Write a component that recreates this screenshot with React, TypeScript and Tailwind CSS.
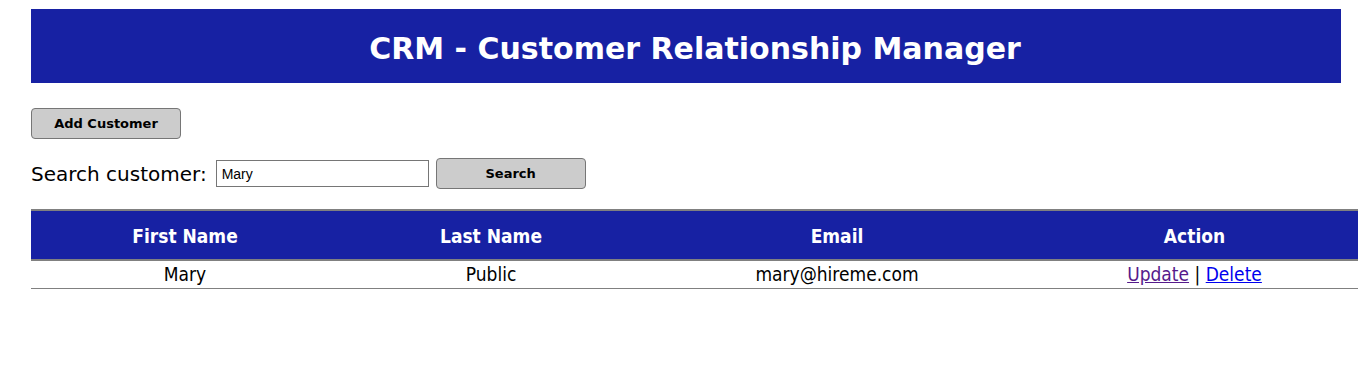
export default function App() {
  return (
    <div className="min-h-[366px] bg-white pt-[9px] pl-[31px] font-['DejaVu_Sans',sans-serif] text-black">
      <div className="flex h-[74px] w-[1310px] items-center justify-center bg-[#1721a3] pt-[5px] pl-[18px]">
        <h1 className="text-[30px] font-bold text-white">CRM - Customer Relationship Manager</h1>
      </div>

      <button
        type="button"
        className="mt-[25px] block h-[31px] w-[150px] rounded-[4px] border border-[#767676] bg-[#cccccc] text-[13px] font-bold"
      >
        Add Customer
      </button>

      <form className="mt-[19px] flex items-center" onSubmit={(e) => e.preventDefault()}>
        <label className="text-[20px]">Search customer:</label>
        <input
          defaultValue="Mary"
          className="ml-[9px] h-[27px] w-[213px] border border-[#767676] px-[5px] font-['Liberation_Sans',sans-serif] text-[14px]"
        />
        <button
          type="submit"
          className="ml-[7px] h-[31px] w-[150px] rounded-[4px] border border-[#767676] bg-[#cccccc] text-[13px] font-bold"
        >
          Search
        </button>
      </form>

      <table className="mt-[20px] w-[1327px] border-collapse text-[19px] [font-stretch:condensed]">
        <thead>
          <tr className="h-[50px] border-t-2 border-b-2 border-[#808080] bg-[#1721a3] text-white">
            <th className="w-[308px] pt-[2px] font-bold">First Name</th>
            <th className="w-[304px] pt-[2px] font-bold">Last Name</th>
            <th className="w-[388px] pt-[2px] font-bold">Email</th>
            <th className="pt-[2px] font-bold">Action</th>
          </tr>
        </thead>
        <tbody>
          <tr className="border-b border-[#808080] text-center leading-[27px]">
            <td className="p-0">Mary</td>
            <td className="p-0">Public</td>
            <td className="p-0">mary@hireme.com</td>
            <td className="p-0">
              <a href="#" className="text-[#551a8b] underline">Update</a> |{" "}
              <a href="#" className="text-[#0000ee] underline">Delete</a>
            </td>
          </tr>
        </tbody>
      </table>
    </div>
  );
}
